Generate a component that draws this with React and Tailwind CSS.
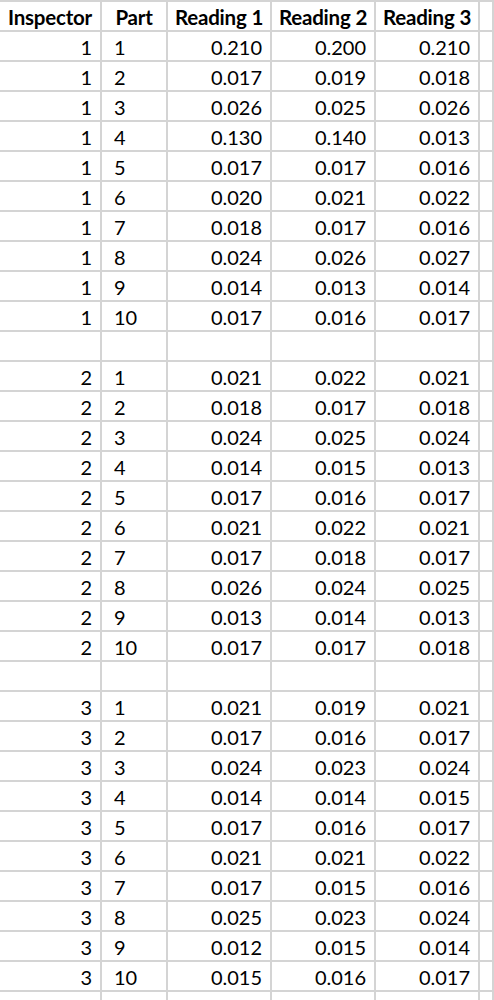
const readings = [
  [
    ["0.210", "0.200", "0.210"],
    ["0.017", "0.019", "0.018"],
    ["0.026", "0.025", "0.026"],
    ["0.130", "0.140", "0.013"],
    ["0.017", "0.017", "0.016"],
    ["0.020", "0.021", "0.022"],
    ["0.018", "0.017", "0.016"],
    ["0.024", "0.026", "0.027"],
    ["0.014", "0.013", "0.014"],
    ["0.017", "0.016", "0.017"],
  ],
  [
    ["0.021", "0.022", "0.021"],
    ["0.018", "0.017", "0.018"],
    ["0.024", "0.025", "0.024"],
    ["0.014", "0.015", "0.013"],
    ["0.017", "0.016", "0.017"],
    ["0.021", "0.022", "0.021"],
    ["0.017", "0.018", "0.017"],
    ["0.026", "0.024", "0.025"],
    ["0.013", "0.014", "0.013"],
    ["0.017", "0.017", "0.018"],
  ],
  [
    ["0.021", "0.019", "0.021"],
    ["0.017", "0.016", "0.017"],
    ["0.024", "0.023", "0.024"],
    ["0.014", "0.014", "0.015"],
    ["0.017", "0.016", "0.017"],
    ["0.021", "0.021", "0.022"],
    ["0.017", "0.015", "0.016"],
    ["0.025", "0.023", "0.024"],
    ["0.012", "0.015", "0.014"],
    ["0.015", "0.016", "0.017"],
  ],
];

const cell = "h-[30px] border-b-2 border-r-2 border-[#d4d4d4] pt-[3px] leading-[25px] whitespace-nowrap";
const headers = ["Inspector", "Part", "Reading 1", "Reading 2", "Reading 3"];

const Row = ({ values }) => (
  <>
    <div className={`${cell} text-right pr-[8px]`}>{values[0]}</div>
    <div className={`${cell} text-left pl-[12px]`}>{values[1]}</div>
    <div className={`${cell} text-right pr-[8px]`}>{values[2]}</div>
    <div className={`${cell} text-right pr-[8px]`}>{values[3]}</div>
    <div className={`${cell} text-right pr-[8px]`}>{values[4]}</div>
    <div className={`${cell} border-r-0`} />
  </>
);

const App = () => {
  const rows = [];
  readings.forEach((group, g) => {
    if (g > 0) rows.push(["", "", "", "", ""]);
    group.forEach((r, i) => rows.push([g + 1, i + 1, ...r]));
  });
  rows.push(["", "", "", "", ""]);

  return (
    <div className="min-h-screen bg-white text-black text-[20px] font-['Lato',sans-serif] overflow-hidden">
      <div className="grid grid-cols-[102px_66px_104px_104px_104px_1fr] border-t-2 border-[#d4d4d4]">
        {headers.map((h) => (
          <div key={h} className={`${cell} text-center font-bold text-[20.5px] tracking-[-0.2px]`}>
            {h}
          </div>
        ))}
        <div className={`${cell} border-r-0`} />

        {rows.map((r, i) => (
          <Row key={i} values={r} />
        ))}
      </div>
    </div>
  );
};

export default App;
